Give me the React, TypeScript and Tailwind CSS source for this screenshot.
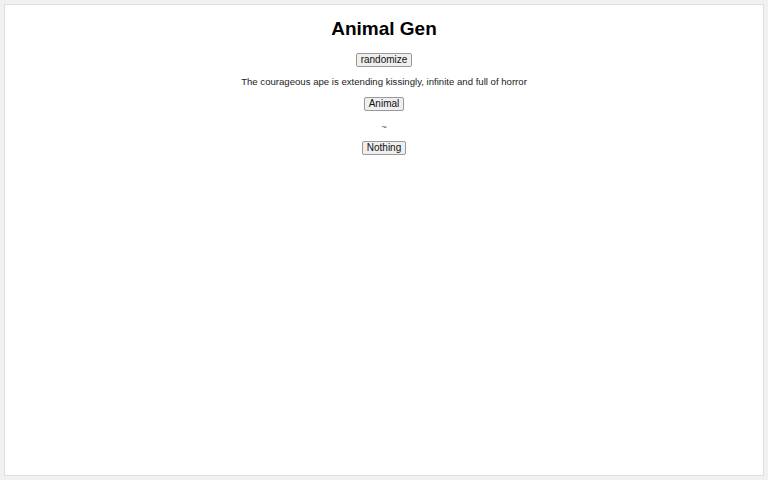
import { useState } from 'react';

const adjectives = ['courageous', 'sleepy', 'gentle', 'furious', 'tiny'];
const animals = ['ape', 'otter', 'heron', 'badger', 'lynx'];

export default function App() {
    const [sentence, setSentence] = useState('The courageous ape is extending kissingly, infinite and full of horror');
    const [mode, setMode] = useState('~');

    const randomize = () => {
        const adj = adjectives[Math.floor(Math.random() * adjectives.length)];
        const animal = animals[Math.floor(Math.random() * animals.length)];
        setSentence(`The ${adj} ${animal} is extending kissingly, infinite and full of horror`);
    };

    const btn = 'bg-[#efefef] border border-[#999] rounded-[2px] px-[4px] text-[10px] leading-[12px] text-[#111]';

    return (
        <div className="h-screen bg-[#f1f1f1] p-[4px] font-['Liberation_Sans',Arial,sans-serif]">
            <div className="h-full bg-white border border-[#dedede] flex flex-col items-center">
                <h1 className="mt-[13px] text-[19px] leading-[22px] font-bold text-black">Animal Gen</h1>
                <button onClick={randomize} className={`${btn} mt-[13px]`}>randomize</button>
                <p className="mt-[9px] text-[9.6px] leading-[12px] text-[#222]">{sentence}</p>
                <button onClick={() => setMode('Animal')} className={`${btn} mt-[9px]`}>Animal</button>
                <p className="mt-[10px] text-[9.6px] leading-[12px] text-[#555]">{mode}</p>
                <button onClick={() => setMode('~')} className={`${btn} mt-[8px]`}>Nothing</button>
            </div>
        </div>
    );
}
